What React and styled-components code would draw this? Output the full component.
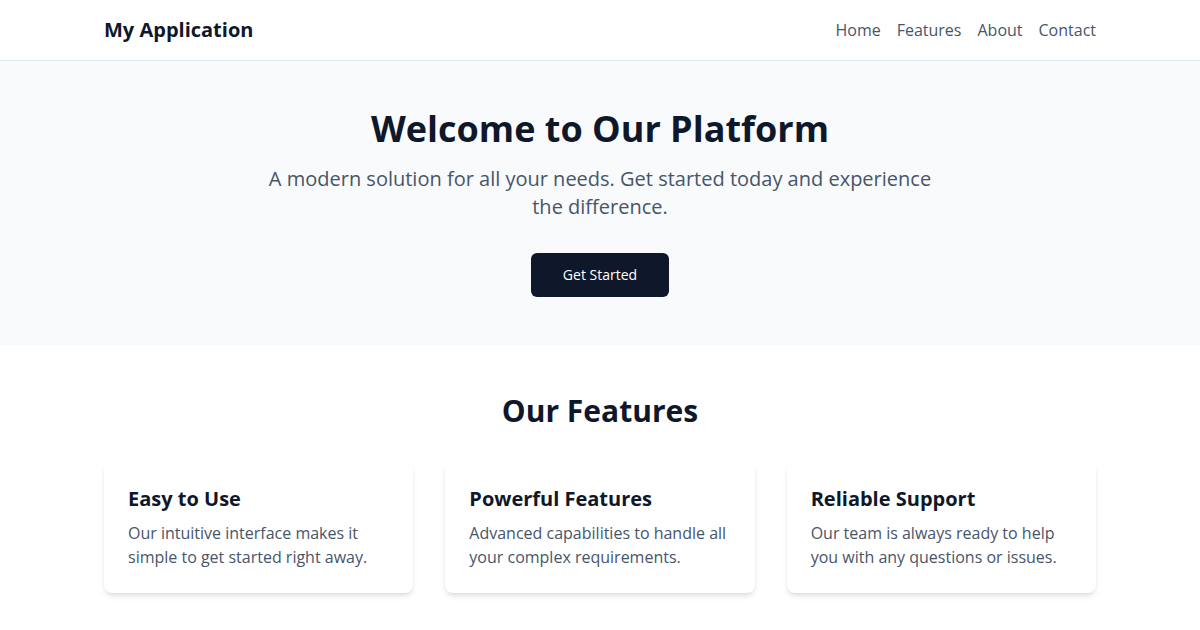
import React from "react";
import styled, { createGlobalStyle } from "styled-components";

const GlobalStyle = createGlobalStyle`
  * { box-sizing: border-box; }
  body {
    margin: 0;
    font-family: "Open Sans", "Liberation Sans", sans-serif;
    color: #0f172a;
    background: #ffffff;
  }
`;

const features = [
  {
    title: "Easy to Use",
    text: "Our intuitive interface makes it simple to get started right away.",
  },
  {
    title: "Powerful Features",
    text: "Advanced capabilities to handle all your complex requirements.",
  },
  {
    title: "Reliable Support",
    text: "Our team is always ready to help you with any questions or issues.",
  },
];

const App = () => {
  return (
    <>
      <GlobalStyle />
      <Header>
        <Container>
          <HeaderRow>
            <Logo>My Application</Logo>
            <Nav>
              <NavLink href="#">Home</NavLink>
              <NavLink href="#">Features</NavLink>
              <NavLink href="#">About</NavLink>
              <NavLink href="#">Contact</NavLink>
            </Nav>
          </HeaderRow>
        </Container>
      </Header>

      <Hero>
        <Container>
          <HeroTitle>Welcome to Our Platform</HeroTitle>
          <HeroText>
            A modern solution for all your needs. Get started today and
            experience the difference.
          </HeroText>
          <PrimaryButton>Get Started</PrimaryButton>
        </Container>
      </Hero>

      <Section>
        <Container>
          <SectionTitle>Our Features</SectionTitle>
          <Grid>
            {features.map((f) => (
              <Card key={f.title}>
                <CardTitle>{f.title}</CardTitle>
                <CardText>{f.text}</CardText>
              </Card>
            ))}
          </Grid>
        </Container>
      </Section>
    </>
  );
};

const Container = styled.div`
  max-width: 992px;
  margin: 0 auto;
`;

const Header = styled.header`
  background: #ffffff;
  border-bottom: 1px solid #e2e8f0;
`;

const HeaderRow = styled.div`
  display: flex;
  align-items: center;
  justify-content: space-between;
  padding: 16px 0;
`;

const Logo = styled.div`
  font-size: 20px;
  line-height: 28px;
  font-weight: 700;
  color: #0f172a;
`;

const Nav = styled.nav`
  display: flex;
  gap: 16px;
`;

const NavLink = styled.a`
  font-size: 16px;
  line-height: 24px;
  color: #475569;
  text-decoration: none;
`;

const Hero = styled.section`
  background: #f8fafc;
  padding: 48px 0;
  text-align: center;
`;

const HeroTitle = styled.h1`
  margin: 0 0 16px;
  font-size: 36px;
  line-height: 40px;
  font-weight: 700;
  color: #0f172a;
`;

const HeroText = styled.p`
  margin: 0 auto 32px;
  max-width: 672px;
  font-size: 20px;
  line-height: 28px;
  color: #475569;
`;

const PrimaryButton = styled.button`
  height: 44px;
  padding: 0 32px 1px;
  border: none;
  border-radius: 6px;
  background: #0f172a;
  color: #ffffff;
  font-family: inherit;
  font-size: 14px;
  cursor: pointer;
`;

const Section = styled.section`
  padding: 48px 0;
`;

const SectionTitle = styled.h2`
  margin: 0 0 33px;
  text-align: center;
  font-size: 30px;
  line-height: 36px;
  font-weight: 700;
  color: #0f172a;
`;

const Grid = styled.div`
  display: grid;
  grid-template-columns: repeat(3, 1fr);
  gap: 32px;
`;

const Card = styled.div`
  background: #ffffff;
  border-radius: 8px;
  padding: 23px 24px 24px;
  box-shadow: 0 4px 6px -1px rgba(0, 0, 0, 0.1), 0 2px 4px -2px rgba(0, 0, 0, 0.1);
`;

const CardTitle = styled.h3`
  margin: 0 0 8px;
  font-size: 20px;
  line-height: 28px;
  font-weight: 700;
  color: #0f172a;
`;

const CardText = styled.p`
  margin: 0;
  font-size: 16px;
  line-height: 24px;
  color: #475569;
`;

export default App;
